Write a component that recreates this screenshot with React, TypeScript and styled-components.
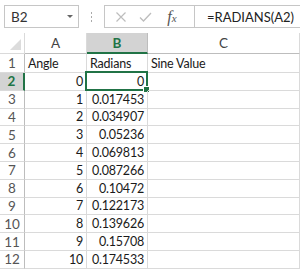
import React from "react";
import styled, { createGlobalStyle } from "styled-components";

const Global = createGlobalStyle`
  html, body { margin: 0; padding: 0; background: #fff; }
  body { width: 300px; height: 269px; overflow: hidden; font-family: Lato, "Liberation Sans", sans-serif; }
`;

const GREEN = "#217346";
const GRID = "#dadada";

const Page = styled.div`
  width: 300px;
  height: 269px;
  overflow: hidden;
  background: #fff;
`;

const FormulaBar = styled.div`
  display: flex;
  align-items: stretch;
  height: 23px;
  padding: 5px 0 5px 4px;
`;

const NameBox = styled.div`
  width: 75px;
  box-sizing: border-box;
  border: 1px solid #c6c6c6;
  display: flex;
  align-items: center;
  justify-content: space-between;
  padding: 0 5px 0 6px;
  font-size: 13.5px;
  color: #333;
`;

const Arrow = styled.span`
  width: 0;
  height: 0;
  border-left: 3px solid transparent;
  border-right: 3px solid transparent;
  border-top: 3px solid #666;
`;

const Dots = styled.div`
  width: 25px;
  display: flex;
  flex-direction: column;
  align-items: center;
  justify-content: center;
  gap: 2px;
  & > span {
    width: 1px;
    height: 2px;
    background: #aaa;
  }
`;

const FxBox = styled.div`
  flex: 1;
  display: flex;
  border: 1px solid #c6c6c6;
  border-right: none;
`;

const IconArea = styled.div`
  width: 85px;
  display: flex;
  align-items: center;
  padding-left: 4px;
`;

const IconSlot = styled.div<{ $w: number }>`
  width: ${(p) => p.$w}px;
  display: flex;
  align-items: center;
  justify-content: center;
`;

const Fx = styled.span`
  font-family: "Liberation Serif", serif;
  font-style: italic;
  font-size: 16px;
  color: #555;
  & > small { font-size: 11px; }
`;

const FormulaText = styled.div`
  flex: 1;
  border-left: 1px solid #c6c6c6;
  display: flex;
  align-items: center;
  padding-left: 12px;
  font-size: 13px;
  color: #222;
`;

const Sheet = styled.div`
  display: grid;
  grid-template-columns: 25px 62px 61px 152px;
  grid-template-rows: 21px 19px repeat(11, 17.8px);
`;

const Corner = styled.div`
  position: relative;
  border-right: 1px solid ${GRID};
  border-bottom: 1px solid ${GRID};
  &::after {
    content: "";
    position: absolute;
    right: 3px;
    bottom: 3px;
    width: 0;
    height: 0;
    border-left: 11px solid transparent;
    border-bottom: 11px solid #dcdcdc;
  }
`;

const ColHead = styled.div<{ $sel?: boolean }>`
  display: flex;
  align-items: center;
  justify-content: center;
  font-size: 13.5px;
  background: ${(p) => (p.$sel ? "#d3d3d3" : "#fff")};
  color: ${(p) => (p.$sel ? GREEN : "#444")};
  font-weight: ${(p) => (p.$sel ? 700 : 400)};
  border-right: 1px solid ${(p) => (p.$sel ? "#bdbdbd" : GRID)};
  border-bottom: ${(p) => (p.$sel ? `2px solid ${GREEN}` : `1px solid #bdbdbd`)};
`;

const RowHead = styled.div<{ $sel?: boolean }>`
  display: flex;
  align-items: center;
  justify-content: center;
  font-size: 13.5px;
  background: ${(p) => (p.$sel ? "#d3d3d3" : "#fff")};
  color: ${(p) => (p.$sel ? GREEN : "#555")};
  font-weight: ${(p) => (p.$sel ? 700 : 400)};
  border-right: ${(p) => (p.$sel ? `2px solid ${GREEN}` : `1px solid #bdbdbd`)};
  border-bottom: 1px solid ${GRID};
`;

const Cell = styled.div<{ $num?: boolean; $sel?: boolean }>`
  position: relative;
  display: flex;
  align-items: center;
  justify-content: ${(p) => (p.$num ? "flex-end" : "flex-start")};
  padding: 0 3px;
  font-size: 12.5px;
  letter-spacing: -0.2px;
  color: #1a1a1a;
  white-space: nowrap;
  border-right: 1px solid ${GRID};
  border-bottom: 1px solid ${GRID};
  ${(p) =>
    p.$sel
      ? `
    &::before {
      content: "";
      position: absolute;
      left: -2px; top: -2px; right: -1px; bottom: -1px;
      border: 2px solid ${GREEN};
      pointer-events: none;
    }
    &::after {
      content: "";
      position: absolute;
      right: -3px; bottom: -3px;
      width: 5px; height: 5px;
      background: ${GREEN};
      border: 1px solid #fff;
    }
  `
      : ""}
`;

const XIcon = () => (
  <svg width="12" height="12" viewBox="0 0 12 12">
    <path d="M1.5 1.5 L10.5 10.5 M10.5 1.5 L1.5 10.5" stroke="#bdbdbd" strokeWidth="1.2" fill="none" />
  </svg>
);

const CheckIcon = () => (
  <svg width="13" height="12" viewBox="0 0 13 12">
    <path d="M1 6.5 L4.5 10 L12 2" stroke="#bdbdbd" strokeWidth="1.3" fill="none" />
  </svg>
);

const rows: [number, string][] = [
  [0, "0"],
  [1, "0.017453"],
  [2, "0.034907"],
  [3, "0.05236"],
  [4, "0.069813"],
  [5, "0.087266"],
  [6, "0.10472"],
  [7, "0.122173"],
  [8, "0.139626"],
  [9, "0.15708"],
  [10, "0.174533"],
];

export default function App() {
  return (
    <Page>
      <Global />
      <FormulaBar>
        <NameBox>
          B2
          <Arrow />
        </NameBox>
        <Dots>
          <span />
          <span />
          <span />
        </Dots>
        <FxBox>
          <IconArea>
            <IconSlot $w={24}>
              <XIcon />
            </IconSlot>
            <IconSlot $w={24}>
              <CheckIcon />
            </IconSlot>
            <IconSlot $w={30}>
              <Fx>
                f<small>x</small>
              </Fx>
            </IconSlot>
          </IconArea>
          <FormulaText>=RADIANS(A2)</FormulaText>
        </FxBox>
      </FormulaBar>
      <Sheet>
        <Corner />
        <ColHead>A</ColHead>
        <ColHead $sel>B</ColHead>
        <ColHead>C</ColHead>

        <RowHead>1</RowHead>
        <Cell>Angle</Cell>
        <Cell>Radians</Cell>
        <Cell>Sine Value</Cell>

        {rows.map(([a, b], i) => (
          <React.Fragment key={i}>
            <RowHead $sel={i === 0}>{i + 2}</RowHead>
            <Cell $num>{a}</Cell>
            <Cell $num $sel={i === 0}>
              {b}
            </Cell>
            <Cell />
          </React.Fragment>
        ))}
      </Sheet>
    </Page>
  );
}
